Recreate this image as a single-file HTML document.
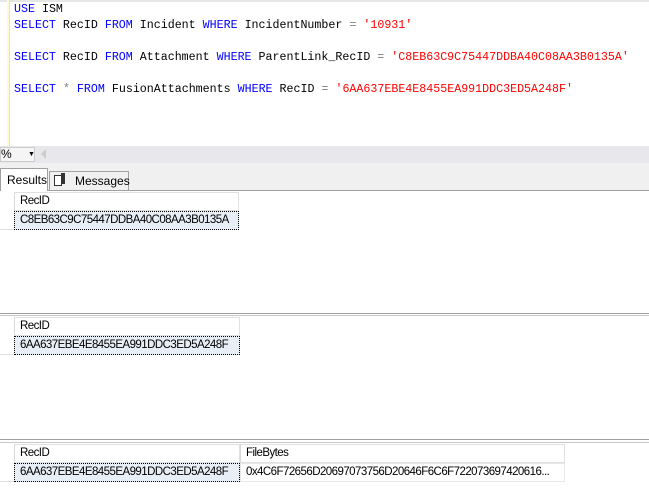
<!DOCTYPE html>
<html><head><style>
body{margin:0;width:649px;height:502px;position:relative;background:#fff;overflow:hidden;font-family:"Liberation Sans",sans-serif}
.a{position:absolute}
.code{font-family:"Liberation Mono",monospace;font-size:11.65px;white-space:pre;left:14px;line-height:16px}
.k{color:#0000ff}.s{color:#ff0000}.g{color:#808080}
.cell{position:absolute;font-size:11.5px;color:#000;line-height:17px;padding-left:5px;box-sizing:border-box;letter-spacing:-0.55px;white-space:nowrap;overflow:hidden}
.hd{background:#fff;border:1px solid #e0e0e0;border-left:1px solid #d8d8d8}
.sel{background:#e8eef5;border:1px dotted #000}
</style></head><body>
<div class="a" style="left:0;top:0;width:649px;height:2px;background:#e6e6e6"></div>
<div class="a" style="left:7px;top:0;width:2px;height:146px;background:#fffbd0;border-right:1px solid #e8e4b0"></div>
<div class="a code" style="top:2px"><span class="k">USE</span> ISM
<span class="k">SELECT</span> RecID <span class="k">FROM</span> Incident <span class="k">WHERE</span> IncidentNumber <span class="g">=</span> <span class="s">'10931'</span>

<span class="k">SELECT</span> RecID <span class="k">FROM</span> Attachment <span class="k">WHERE</span> ParentLink_RecID <span class="g">=</span> <span class="s">'C8EB63C9C75447DDBA40C08AA3B0135A'</span>

<span class="k">SELECT</span> <span class="g">*</span> <span class="k">FROM</span> FusionAttachments <span class="k">WHERE</span> RecID <span class="g">=</span> <span class="s">'6AA637EBE4E8455EA991DDC3ED5A248F'</span></div>
<div class="a" style="left:0;top:146px;width:649px;height:17px;background:#e8e8ec"></div>
<div class="a" style="left:0;top:147px;width:35px;height:15px;background:#f5f5f5;border:1px solid #ccc;box-sizing:border-box;font-size:12px;line-height:13px">%<span style="position:absolute;left:27px;top:0;font-size:7px">▼</span></div>
<div class="a" style="left:41px;top:149px;width:0;height:0;border-top:5px solid transparent;border-bottom:5px solid transparent;border-right:5px solid #ccc"></div>
<div class="a" style="left:0;top:163px;width:649px;height:28px;background:#f0f0f0"></div>
<div class="a" style="left:0;top:190px;width:649px;height:1px;background:#a0a0a0"></div>
<div class="a" style="left:0;top:168px;width:48px;height:23px;background:#fff;border:1px solid #a0a0a0;border-bottom:none;box-sizing:border-box;font-size:12px;padding:4px 0 0 6px">Results</div>
<div class="a" style="left:49px;top:171px;width:80px;height:19px;background:#f0f0f0;border:1px solid #a0a0a0;border-bottom:none;box-sizing:border-box;font-size:12px;padding:2px 0 0 25px">Messages</div>
<div class="a" style="left:54px;top:175px;width:8px;height:11px;border:1px solid #333;box-sizing:border-box;background:#fff"></div>
<div class="a" style="left:61px;top:173px;width:4px;height:11px;background:#333"></div>

<div class="cell hd" style="left:14px;top:192px;width:225px;height:19px">RecID</div>
<div class="cell sel" style="left:14px;top:211px;width:225px;height:19px">C8EB63C9C75447DDBA40C08AA3B0135A</div>
<div class="a" style="left:0;top:211px;width:14px;height:18px;border-bottom:1px solid #e0e0e0"></div>

<div class="a" style="left:0;top:313px;width:649px;height:1px;background:#a0a0a0"></div>
<div class="a" style="left:0;top:315px;width:649px;height:1px;background:#c8c8c8"></div>
<div class="cell hd" style="left:14px;top:317px;width:226px;height:19px">RecID</div>
<div class="cell sel" style="left:14px;top:336px;width:226px;height:19px">6AA637EBE4E8455EA991DDC3ED5A248F</div>
<div class="a" style="left:0;top:336px;width:14px;height:18px;border-bottom:1px solid #e0e0e0"></div>

<div class="a" style="left:0;top:439px;width:649px;height:1px;background:#a0a0a0"></div>
<div class="a" style="left:0;top:442px;width:649px;height:1px;background:#c8c8c8"></div>
<div class="cell hd" style="left:14px;top:444px;width:226px;height:19px">RecID</div>
<div class="cell hd" style="left:240px;top:444px;width:325px;height:19px">FileBytes</div>
<div class="cell sel" style="left:14px;top:463px;width:226px;height:19px">6AA637EBE4E8455EA991DDC3ED5A248F</div>
<div class="cell" style="left:240px;top:463px;width:325px;height:19px;border:1px solid #e8e8e8">0x4C6F72656D20697073756D20646F6C6F722073697420616...</div>
<div class="a" style="left:0;top:463px;width:14px;height:18px;border-bottom:1px solid #e0e0e0"></div>
</body></html>
